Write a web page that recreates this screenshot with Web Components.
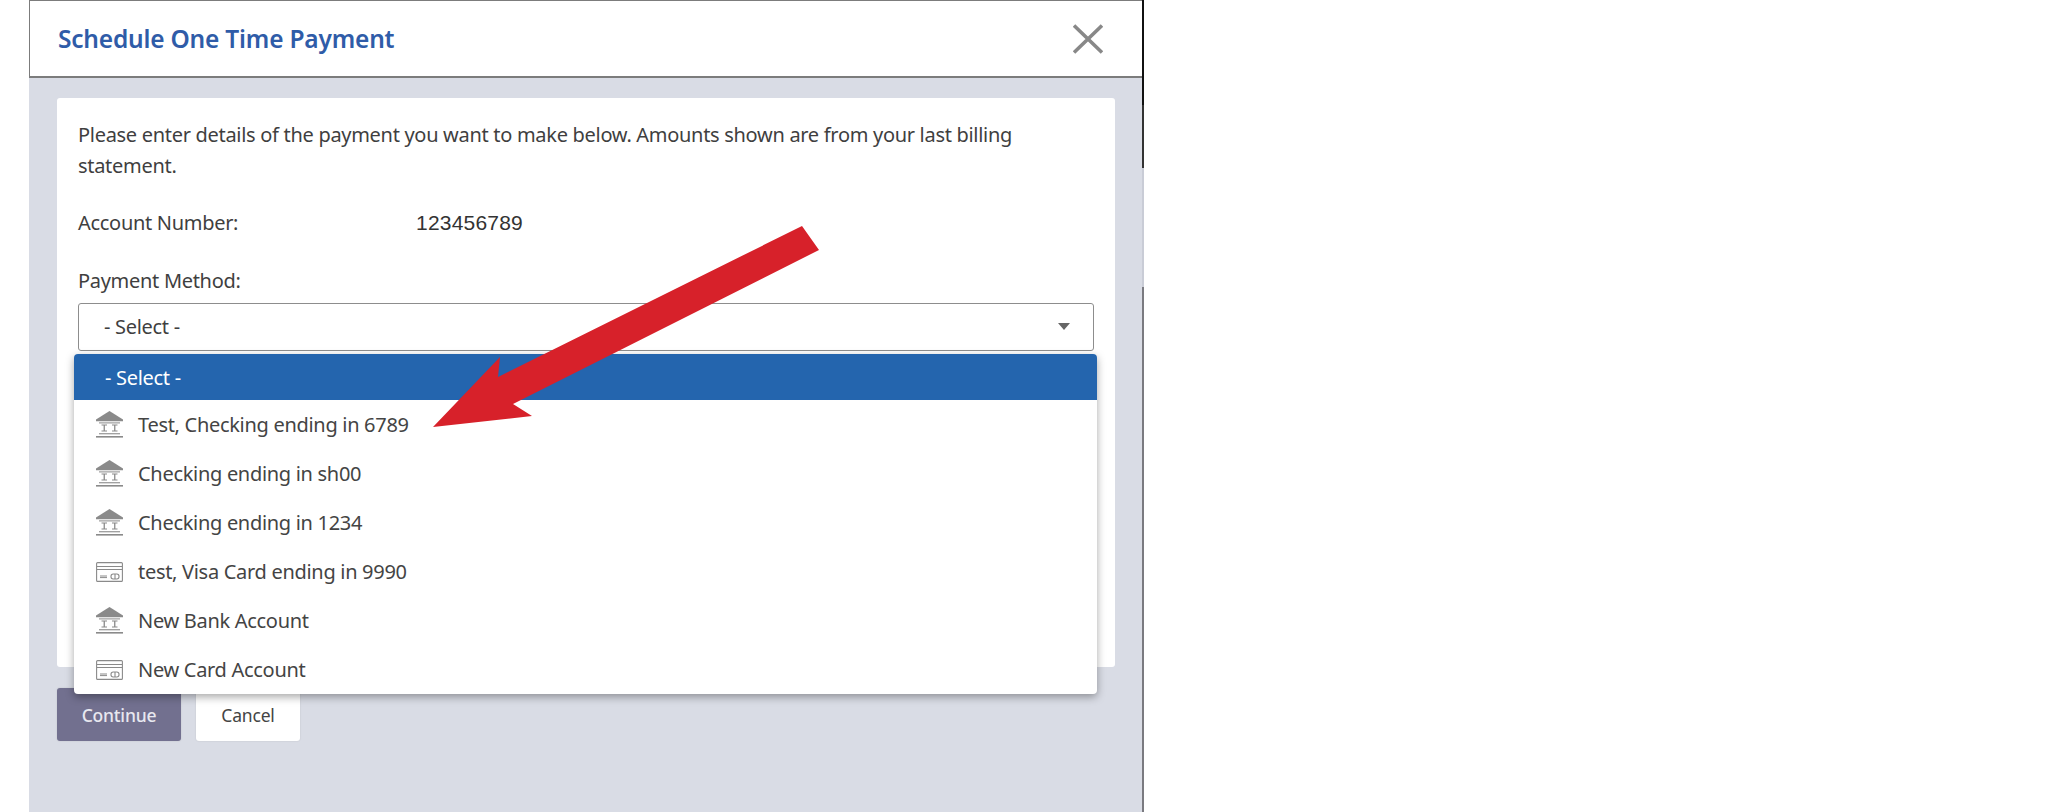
<!DOCTYPE html>
<html><head><meta charset="utf-8">
<style>
html,body{margin:0;padding:0;background:#fff;height:812px;overflow:hidden}
body{font-family:"Noto Sans",sans-serif;color:#3d3d3d}
</style></head>
<body>
<app-modal>
  <span slot="title">Schedule One Time Payment</span>
  <pay-card>
    <p-text>Please enter details of the payment you want to make below. Amounts shown are from your last billing statement.</p-text>
    <info-row label="Account Number:" value="123456789"></info-row>
    <pay-select label="Payment Method:" value="- Select -">
      <menu-item selected>- Select -</menu-item>
      <menu-item icon="bank">Test, Checking ending in 6789</menu-item>
      <menu-item icon="bank">Checking ending in sh00</menu-item>
      <menu-item icon="bank">Checking ending in 1234</menu-item>
      <menu-item icon="card">test, Visa Card ending in 9990</menu-item>
      <menu-item icon="bank">New Bank Account</menu-item>
      <menu-item icon="card">New Card Account</menu-item>
    </pay-select>
  </pay-card>
  <button-row>
    <pay-button primary>Continue</pay-button>
    <pay-button>Cancel</pay-button>
  </button-row>
</app-modal>
<red-arrow></red-arrow>
<script>
function def(name,html){
  customElements.define(name,class extends HTMLElement{
    constructor(){super();this.attachShadow({mode:'open'});if(typeof html!=='function')this.shadowRoot.innerHTML=html;}
    connectedCallback(){
      if(typeof html==='function'&&!this._d){this._d=1;this.shadowRoot.innerHTML=html(this);}
    }
  });
}
const T='font-family:"Noto Sans",sans-serif;';
def('app-modal',`<style>
:host{display:flex;flex-direction:column;width:1115px;height:812px;margin-left:29px;background:#d9dce5;box-sizing:border-box;position:relative}
.rail{position:absolute;top:0;right:0;bottom:0;width:2px;background:linear-gradient(#111 0 105px,#333 105px 168px,#c9ccd6 168px 287px,#7a7a80 287px)}
header{height:78px;box-sizing:border-box;background:#fff;border:1px solid #7c7c7c;border-width:1px 0 2px 1px;display:flex;align-items:center;justify-content:space-between;padding:0 41px 0 28px;flex:none}
h1{margin:0;${T}font-size:24.5px;font-weight:600;color:#2f5ca8;letter-spacing:-.2px}
svg{width:30px;height:30px;display:block}
main{padding:20px 29px 0 28px;display:flex;flex-direction:column}
</style><div class="rail"></div>
<header><h1><slot name="title"></slot></h1>
<svg viewBox="0 0 30 30" fill="none" stroke="#888" stroke-width="3.6"><path d="M1 1.5 29 28.5M29 1.5 1 28.5"/></svg></header>
<main><slot></slot></main>`);
def('pay-card',`<style>
:host{display:flex;flex-direction:column;height:569px;box-sizing:border-box;padding:21px 21px 0;background:#fff;border-radius:3px;position:relative}
</style><slot></slot>`);
def('p-text',`<style>:host{display:block;max-width:985px;font-size:20px;line-height:31px;letter-spacing:-.3px;color:#3f3f3f}</style><slot></slot>`);
def('info-row',el=>`<style>
:host{display:flex;margin-top:26px;height:31px;align-items:center;font-size:20px;color:#3f3f3f;letter-spacing:-.3px}
.l{width:338px}.v{font-family:"Liberation Sans",sans-serif;font-size:21px;letter-spacing:.2px;color:#333}
</style><span class="l">${el.getAttribute('label')}</span><span class="v">${el.getAttribute('value')}</span>`);
def('pay-select',el=>`<style>
:host{display:block;margin-top:27px;font-size:20px;color:#3f3f3f;letter-spacing:-.3px}
.lab{display:block;height:31px;line-height:31px;margin-bottom:7px}
.wrap{position:relative}
.box{height:48px;box-sizing:border-box;border:1px solid #8d8d8d;border-radius:3px;display:flex;align-items:center;justify-content:space-between;padding:0 23px 2px 25px;background:#fff}
i{width:0;height:0;border:6.5px solid transparent;border-top:7px solid #666;border-bottom:0;display:block}
.menu{position:absolute;left:-4px;right:-3px;top:51px;background:#fff;border-radius:4px;overflow:hidden;box-shadow:0 3px 9px rgba(0,0,0,.35)}
</style><span class="lab">${el.getAttribute('label')}</span>
<div class="wrap"><div class="box"><span>${el.getAttribute('value')}</span><i></i></div>
<div class="menu"><slot></slot></div></div>`);
const bank=`<svg viewBox="0 0 27 27" width="27" height="27" fill="#8a8a8a"><path d="M13.5 0 27 8.6v1.6H0V8.6z"/><rect x="3" y="11.4" width="21" height="1"/><path d="M5.5 13.4h5.5v1H8.9v5.2H11v1H5.5v-1h2.1v-5.2H5.5zM16 13.4h5.5v1h-2.1v5.2h2.1v1H16v-1h2.1v-5.2H16z"/><rect x="3" y="22.2" width="21" height="1.1"/><rect x="0" y="25" width="27" height="1.6"/></svg>`;
const card=`<svg viewBox="0 0 27 20" width="27" height="20" fill="none" stroke="#8a8a8a" stroke-width="1.1"><rect x=".6" y=".6" width="25.8" height="18.8" rx="1"/><path d="M1 4.5h25M1 7.5h25"/><path d="M4 14h7M4 15.6h7" stroke-width="1"/><rect x="15" y="12" width="8" height="5" rx="2.2"/><path d="M19 12v5"/></svg>`;
def('menu-item',el=>{
  const ic=el.getAttribute('icon');
  return `<style>
:host{display:flex;align-items:center;height:49px;box-sizing:border-box;padding-left:22px;gap:15px;font-size:20px;color:#444;letter-spacing:-.3px}
:host([selected]){height:46px;background:#2465ae;color:#fff;padding-left:31px}
svg{display:block;flex:none}.w{width:27px;display:flex;justify-content:center}
</style>${ic?`<span class="w">${ic==='bank'?bank:card}</span>`:''}<span><slot></slot></span>`});
def('button-row',`<style>:host{display:flex;gap:15px;margin-top:21px}</style><slot></slot>`);
def('pay-button',`<style>
:host{display:flex;align-items:center;justify-content:center;height:53px;width:104px;box-sizing:border-box;border-radius:3px;background:#fff;color:#444;font-size:17.5px;letter-spacing:-.2px;box-shadow:0 0 2px rgba(0,0,0,.12)}
:host([primary]){width:124px;background:#72708f;color:#e8e8f0;font-weight:500}
</style><slot></slot>`);
def('red-arrow',`<style>:host{position:absolute;left:0;top:0;width:0;height:0}svg{position:absolute;left:0;top:0;overflow:visible}</style>
<svg width="1" height="1"><polygon fill="#d7212a" points="802,226 819,250 513,404 532,416 433,427 500,357 498,377"/></svg>`);
</script>
</body></html>
